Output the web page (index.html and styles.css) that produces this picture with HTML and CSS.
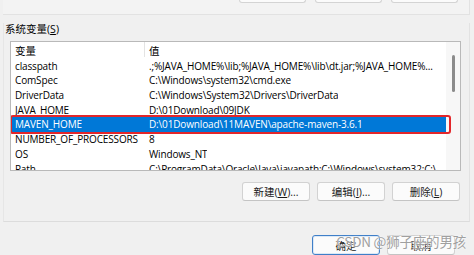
FILE: index.html
```html
<!DOCTYPE html>
<html lang="zh-CN">
<head>
  <meta charset="UTF-8">
  <title>环境变量</title>
  <link rel="stylesheet" href="styles.css">
</head>
<body>
  <div class="user-group">
    <span class="stub"></span>
    <span class="stub"></span>
    <span class="stub"></span>
  </div>

  <section class="sys-group">
    <p class="group-label">系统变量(<u>S</u>)</p>
    <div class="listbox">
      <div class="rows">
        <div class="row head"><span class="c-name">变量</span><span class="c-val">值</span></div>
        <div class="row"><span class="c-name">classpath</span><span class="c-val">.;%JAVA_HOME%\lib;%JAVA_HOME%\lib\dt.jar;%JAVA_HOME%...</span></div>
        <div class="row"><span class="c-name">ComSpec</span><span class="c-val">C:\Windows\system32\cmd.exe</span></div>
        <div class="row"><span class="c-name">DriverData</span><span class="c-val">C:\Windows\System32\Drivers\DriverData</span></div>
        <div class="row"><span class="c-name">JAVA_HOME</span><span class="c-val">D:\01Download\09JDK</span></div>
        <div class="row selected"><span class="c-name">MAVEN_HOME</span><span class="c-val">D:\01Download\11MAVEN\apache-maven-3.6.1</span></div>
        <div class="row"><span class="c-name">NUMBER_OF_PROCESSORS</span><span class="c-val">8</span></div>
        <div class="row"><span class="c-name">OS</span><span class="c-val">Windows_NT</span></div>
        <div class="row"><span class="c-name">Path</span><span class="c-val">C:\ProgramData\Oracle\Java\javapath;C:\Windows\system32;C:\...</span></div>
      </div>
      <div class="scrollbar"><div class="thumb"></div></div>
    </div>
    <div class="btn-row">
      <button class="btn">新建(<u>W</u>)...</button>
      <button class="btn">编辑(<u>I</u>)...</button>
      <button class="btn">删除(<u>L</u>)</button>
    </div>
  </section>

  <div class="dialog-foot">
    <button class="btn btn-default">确定</button>
    <button class="btn">取消</button>
  </div>

  <div class="watermark">CSDN @狮子座的男孩</div>
</body>
</html>
```

FILE: styles.css
```css
* { box-sizing: border-box; margin: 0; padding: 0; }
body { position: relative; width: 474px; height: 255px; overflow: hidden; background: #f0f0f0; color: #000; font-family: 'Open Sans', 'Noto Sans CJK SC', sans-serif; font-size: 10.5px; }

.user-group { margin-left: 3px; width: 467px; height: 15px; background: #f3f3f3; border-right: 1px solid #e2e2e2; border-bottom: 1px solid #e2e2e2; display: flex; justify-content: flex-end; align-items: flex-start; gap: 9px; padding-right: 11px; }
.stub { width: 67px; height: 3px; background: #fbfbfb; border: 1px solid #d4d4d4; border-top: none; border-radius: 0 0 3px 3px; }

.sys-group { margin-left: 3px; width: 467px; height: 199px; border-left: 1px solid #e6e6e6; border-right: 1px solid #e2e2e2; border-bottom: 1px solid #dcdcdc; padding: 0 9px 0 1px; }
.group-label { height: 12px; line-height: 12px; margin-top: 8px; margin-bottom: 6px; }
.group-label u { text-underline-offset: 1px; }

.listbox { display: flex; margin-left: 5px; width: 451px; height: 130px; background: #fff; border: 1px solid #b9b9b9; overflow: hidden; }
.rows { flex: 1; padding-top: 2px; font-size: 10px; letter-spacing: -0.15px; }
.row { position: relative; display: flex; height: 14.7px; line-height: 14.7px; white-space: nowrap; }
.c-name { width: 134px; padding-left: 4px; flex-shrink: 0; }
.c-val { padding-left: 4px; overflow: hidden; }
.row.head { font-size: 10.5px; letter-spacing: 0; }
.row.head .c-name { border-right: 1px solid #e3e3e3; height: 16px; margin-top: -3px; padding-top: 3px; }
.row.selected { background: #0078d7; color: #fff; }
.row.selected::after { content: ''; position: absolute; top: -2px; bottom: -2px; left: -1px; right: -5px; border: 2px solid #e3262a; border-radius: 3px; }

.scrollbar { width: 14px; background: #f7f7f7; padding: 13px 0 0 6px; }
.thumb { width: 3px; height: 37px; background: #8b8b8b; border-radius: 2px; }

.btn-row { display: flex; justify-content: flex-end; gap: 7px; margin-top: 11px; }
.btn { width: 68px; height: 19px; font: inherit; color: #1a1a1a; background: #fbfbfb; border: 1px solid #d2d2d2; border-bottom-color: #c4c4c4; border-radius: 3px; }
.btn u { text-underline-offset: 1px; }

.dialog-foot { display: flex; justify-content: flex-end; gap: 7px; padding: 13px 19px 0 0; }
.dialog-foot .btn { height: 20px; }
.btn-default { border: 1px solid #3f7fc8; box-shadow: inset 0 0 0 1px #dbe8f6; }

.watermark { position: absolute; right: 8px; bottom: 6px; font-family: 'Noto Sans CJK SC', sans-serif; font-size: 13.5px; line-height: 15px; color: #a0a0a0; text-shadow: 0 0 2px #fff, 0 0 1px #fff; letter-spacing: -0.2px; }
```
